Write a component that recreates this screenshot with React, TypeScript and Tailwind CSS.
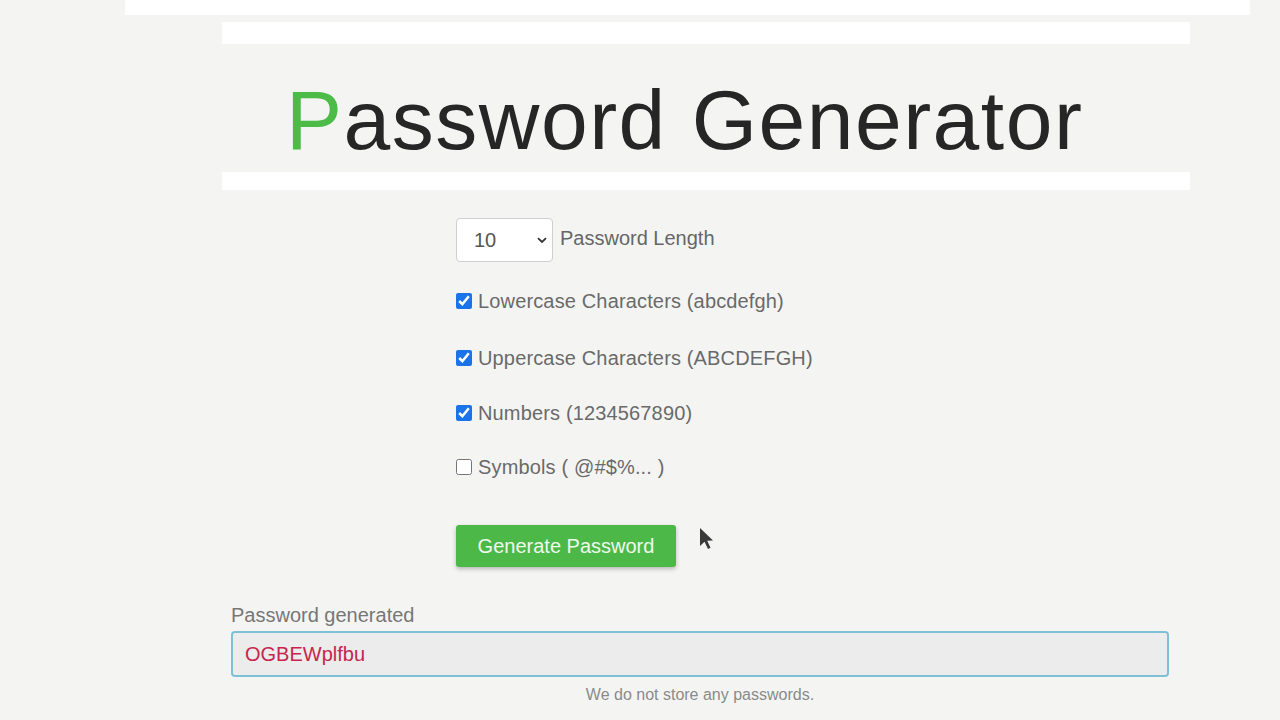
import { useState } from 'react'

const LENGTHS = [6, 8, 10, 12, 16, 20, 24, 32]

// mt per row keeps the uneven spacing between the checkboxes
const OPTIONS = [
  { key: 'lower', label: 'Lowercase Characters (abcdefgh)', mt: 'mt-0' },
  { key: 'upper', label: 'Uppercase Characters (ABCDEFGH)', mt: 'mt-[33px]' },
  { key: 'numbers', label: 'Numbers (1234567890)', mt: 'mt-[31px]' },
  { key: 'symbols', label: 'Symbols ( @#$%... )', mt: 'mt-[30px]' },
] as const

type OptionKey = (typeof OPTIONS)[number]['key']

function Pointer() {
  return (
    <svg width="16" height="24" viewBox="0 0 16 24" className="absolute left-[243px] top-[2px]">
      <path d="M1 1 L1 19 L5.5 14.8 L9 22 L11.5 20.8 L8.2 13.8 L14 13.6 Z" fill="#3a3a3a" />
    </svg>
  )
}

export default function App() {
  const [length, setLength] = useState(10)
  const [opts, setOpts] = useState<Record<OptionKey, boolean>>({
    lower: true,
    upper: true,
    numbers: true,
    symbols: false,
  })
  const [password] = useState('OGBEWplfbu')

  const toggle = (key: OptionKey) => setOpts((prev) => ({ ...prev, [key]: !prev[key] }))

  return (
    <div className="h-[720px] overflow-hidden bg-[#f4f5f3] font-['Liberation_Sans',Arial,sans-serif]">
      <div className="ml-[125px] mr-[30px] h-[15px] bg-white" />

      {/* header strip */}
      <div className="flex flex-col pt-[7px] pl-[222px] pr-[90px]">
        <div className="h-[22px] bg-white" />
        <div className="h-[128px] flex items-center pl-[64px] pt-[23px]">
          <h1 className="text-[84px] leading-none tracking-[1.5px] text-[#262626]">
            <span className="text-[#4cbb47]">P</span>assword Generator
          </h1>
        </div>
        <div className="h-[18px] bg-white" />
      </div>

      <form className="flex flex-col pl-[456px] pt-[28px]" onSubmit={(e) => e.preventDefault()}>
        <div className="flex items-start gap-[7px]">
          <div className="relative w-[97px] h-[44px]">
            <select
              value={length}
              onChange={(e) => setLength(Number(e.target.value))}
              className="appearance-none w-full h-full rounded-[4px] border border-[#cfcfcf] bg-white pl-[17px] text-[20px] text-[#555] outline-none"
            >
              {LENGTHS.map((n) => (
                <option key={n} value={n}>
                  {n}
                </option>
              ))}
            </select>
            <svg
              width="10"
              height="7"
              viewBox="0 0 10 7"
              className="pointer-events-none absolute right-[6px] top-[19px]"
            >
              <path d="M1 1.2 L5 5 L9 1.2" fill="none" stroke="#333" strokeWidth="1.8" />
            </svg>
          </div>
          <span className="text-[20px] leading-[40px] text-[#666]">Password Length</span>
        </div>

        <div className="flex flex-col mt-[27px]">
          {OPTIONS.map((o) => (
            <label key={o.key} className={`flex items-center gap-[6px] h-[24px] ${o.mt}`}>
              <input
                type="checkbox"
                checked={opts[o.key]}
                onChange={() => toggle(o.key)}
                className="w-[16px] h-[16px] m-0 accent-[#1a73e8]"
              />
              <span className="text-[20px] tracking-[0.15px] text-[#6a6a6a]">{o.label}</span>
            </label>
          ))}
        </div>

        <div className="relative mt-[46px]">
          <button
            type="submit"
            className="w-[220px] h-[42px] rounded-[3px] bg-[#4cb848] text-[20px] text-[#eefaec] shadow-[0_2px_4px_rgba(0,0,0,0.25)]"
          >
            Generate Password
          </button>
          <Pointer />
        </div>
      </form>

      <div className="flex flex-col pl-[231px] pr-[111px] mt-[36px]">
        <label className="text-[20px] leading-[24px] text-[#777]">Password generated</label>
        <input
          readOnly
          value={password}
          className="mt-[4px] h-[46px] rounded-[4px] border-2 border-[#7cc1d6] bg-[#ececec] px-[12px] text-[20px] text-[#c7254e] outline-none"
        />
        <p className="mt-[6px] text-center text-[16px] text-[#8a8a8a]">We do not store any passwords.</p>
      </div>
    </div>
  )
}
